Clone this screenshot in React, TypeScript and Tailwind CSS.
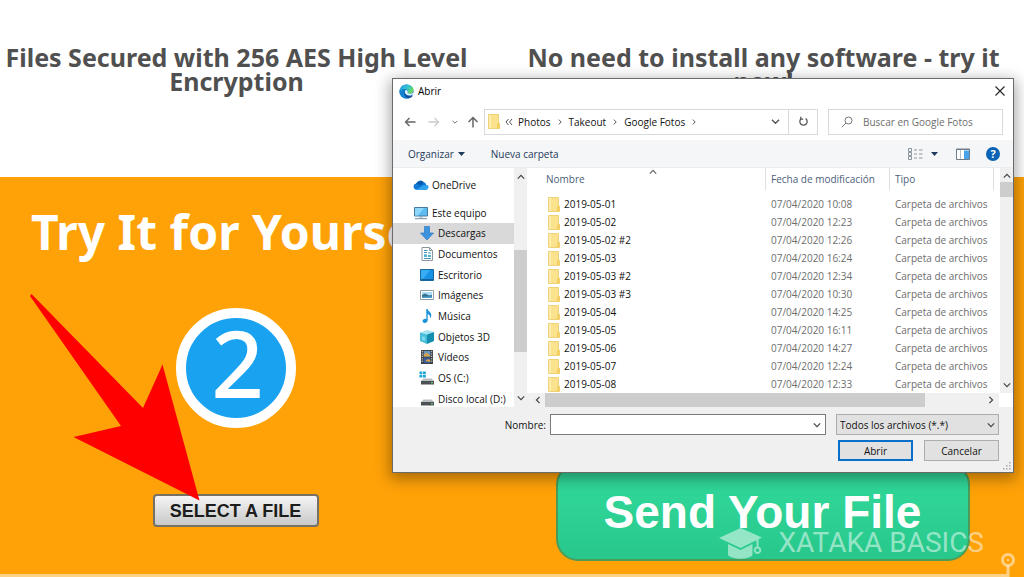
import React from "react";

type IconProps = { className?: string };

const Chevron = ({ className = "" }: IconProps) => (
  <svg viewBox="0 0 10 10" className={className} fill="none" stroke="currentColor" strokeWidth="1.5" aria-hidden="true">
    <path d="M1 3l4 4 4-4" />
  </svg>
);

const Folder = ({ className = "" }: IconProps) => (
  <svg viewBox="0 0 12 15" className={className} aria-hidden="true">
    <path d="M.5.5h10v8.500h1v5.500H.5z" fill="#fbe38e" stroke="#ecc964" strokeWidth=".8" />
    <path d="M1 1h2v13H1z" fill="#fdeeb0" />
    <path d="M9 9.500h2.500v5H9z" fill="#f3cf62" />
  </svg>
);

const EdgeLogo = ({ className = "" }: IconProps) => (
  <svg viewBox="0 0 16 16" className={className} aria-hidden="true">
    <defs>
      <linearGradient id="edgeTop" x1="0" y1="0" x2="1" y2="0.500">
        <stop offset="0" stopColor="#249fe0" />
        <stop offset=".6" stopColor="#35c1d0" />
        <stop offset="1" stopColor="#6adb58" />
      </linearGradient>
    </defs>
    <circle cx="8" cy="8" r="7.500" fill="#1273c6" />
    <path d="M.5 8C.8 3.500 4 .5 8 .5c4.500 0 7.500 3 7.500 6 0 2.500-2 3.800-4.200 3.800-1.800 0-2.400-.6-2.100-1.200.7-1.200.5-3.300-2.200-3.500C3.500 5.400.9 7 .5 8z" fill="url(#edgeTop)" />
    <path d="M7 5.600c-2 .8-2.800 3-1.800 5.300 1.300 3 5 3.800 8.800 1.800-1.300 1.700-3.400 2.800-6 2.800C3.500 15.500.5 12 .5 8 1.500 6 4.500 5 7 5.600z" fill="#1583d2" />
    <path d="M6.400 8.200c0 3.600 3.700 5.500 7.700 4.200.4-.2.700.1.400.4-1.100 1.400-2.800 2.200-4.500 2.300C6.500 14.500 5 11 6.400 8.200z" fill="#14509e" />
    <path d="M7.200 6.300c1.700 0 2.600 1.300 2 2.800-.3.600.3 1.200 2.100 1.200 1.800.1 3-.3 4-1.200-.2 1.900-1.300 2.900-3.300 3.100-3 .2-5.700-1-5.700-3.900 0-.9.300-1.500.9-2z" fill="#e4f5fb" />
  </svg>
);

const CloudIcon = () => (
  <svg viewBox="0 0 16 16" className="size-4" aria-hidden="true">
    <path d="M3.500 12.800A3.200 3.200 0 013 6.500 4.500 4.500 0 0110.500 5a4 4 0 012.800 3 2.500 2.500 0 01-.2 4.800z" fill="#0f78d4" />
    <path d="M4.500 6a4.300 4.300 0 016.300-.8l-3.300 3L3 6.600z" fill="#0a55a5" />
    <path d="M3.500 12.800l7-4.600 4.600.4c1.200 2-.3 4.200-2 4.200z" fill="#2ea5ee" />
  </svg>
);

const ComputerIcon = () => (
  <svg viewBox="0 0 16 16" className="size-4" aria-hidden="true">
    <path d="M1.500 2.500h13v8.500h-13z" fill="#5dbdf3" stroke="#47799c" />
    <path d="M2 3h9L5 10.500H2z" fill="#8ed7fb" />
    <path d="M6 11.500h4v1H6zM2 13h12v1.200H2z" fill="#8ba5b6" />
  </svg>
);

const DownloadIcon = () => (
  <svg viewBox="0 0 16 16" className="size-4" aria-hidden="true">
    <path d="M5.500 1.500h5V8h4L8 15 1.500 8h4z" fill="#3c94df" stroke="#2b78c2" strokeWidth=".7" />
  </svg>
);

const DocumentIcon = () => (
  <svg viewBox="0 0 16 16" className="size-4" aria-hidden="true">
    <path d="M3 1.500h7.500L13.500 4.500v10H3z" fill="#fff" stroke="#8a979f" />
    <path d="M10.500 1.500v3h3" fill="none" stroke="#8a979f" />
    <path d="M5 4.500h3.500M5 6.500h3M9 7h3M5 9h2M5 12.500h7" stroke="#4694b8" />
    <path d="M5 8.500h3v2.500H5zM9 9h3v2H9z" fill="#4db3d3" />
  </svg>
);

const DesktopIcon = () => (
  <svg viewBox="0 0 16 16" className="size-4" aria-hidden="true">
    <path d="M1.500 2.500h13v11h-13z" fill="#1792e4" stroke="#17699f" />
    <path d="M2 3h9L4 12H2z" fill="#39adf3" />
    <path d="M2 12h12v1.200H2z" fill="#12629c" />
  </svg>
);

const PictureIcon = () => (
  <svg viewBox="0 0 16 16" className="size-4" aria-hidden="true">
    <path d="M1.500 3.500h13v9h-13z" fill="#fff" stroke="#8e9aa1" />
    <path d="M3 5h10v6H3z" fill="#a9dcf5" />
    <path d="M3 8l3-1.500 4 2 3-.5v3H3z" fill="#386e91" />
    <path d="M3 9.800l10-.6V11H3z" fill="#4ba0cb" />
  </svg>
);

const MusicIcon = () => (
  <svg viewBox="0 0 16 16" className="size-4" aria-hidden="true">
    <path d="M7.300 1h1.400c.2 2.200 3.700 3.200 3.600 6.200 0 1.300-.5 2.200-1.200 3 .3-2.200-.6-3.600-2.400-4.300v6.300c0 1.500-1.300 2.800-3 2.800-1.400 0-2.200-.8-2.200-1.900 0-1.700 2-2.800 3.800-2.200z" fill="#1c93dc" />
  </svg>
);

const CubeIcon = () => (
  <svg viewBox="0 0 16 16" className="size-4" aria-hidden="true">
    <path d="M1 3.500L8.500 1 15 3 8 5.500z" fill="#a1e4f2" />
    <path d="M1 3.500l7 2V15l-7-3z" fill="#46bdd9" />
    <path d="M8 5.500L15 3v9l-7 3z" fill="#148eae" />
    <path d="M3 7l3 1v4l-3-1z" fill="#7ad9ec" />
  </svg>
);

const VideoIcon = () => (
  <svg viewBox="0 0 16 16" className="size-4" aria-hidden="true">
    <path d="M2 1h12v14H2z" fill="#3e4245" />
    <path d="M4.700 2h6.600v5.500H4.700z" fill="#6297c9" />
    <path d="M4.700 8.500h6.600V14H4.700z" fill="#365d99" />
    <path d="M4.700 5.500l3-2 3.600 3v1H4.700zM6 12l3-2 2.300 1v2z" fill="#d5a24c" />
    <path d="M3.300 2v12M12.700 2v12" stroke="#d7dadb" strokeWidth="1" strokeDasharray="1.200 1.200" />
  </svg>
);

const DriveShape = () => (
  <>
    <path d="M3.500 8.500h8L14 11H1z" fill="#b9bdc0" />
    <path d="M1 11h13v3.500H1z" fill="#4b5053" />
    <path d="M11 12.300h2v1h-2z" fill="#7fe089" />
  </>
);

const OsDriveIcon = () => (
  <svg viewBox="0 0 16 16" className="size-4" aria-hidden="true">
    <g transform="translate(1 0)"><DriveShape /></g>
    <path d="M.5 1.500h2.800v2.600H.5zM4 1.500h2.800v2.600H4zM.5 4.800h2.800v2.600H.5zM4 4.800h2.800v2.600H4z" fill="#1aa4d8" />
  </svg>
);

const DriveIcon = () => (
  <svg viewBox="0 0 16 16" className="size-4" aria-hidden="true">
    <g transform="translate(1 0)"><DriveShape /></g>
  </svg>
);

const places = [
  { name: "Descargas", Icon: DownloadIcon, active: true },
  { name: "Documentos", Icon: DocumentIcon },
  { name: "Escritorio", Icon: DesktopIcon },
  { name: "Imágenes", Icon: PictureIcon },
  { name: "Música", Icon: MusicIcon },
  { name: "Objetos 3D", Icon: CubeIcon },
  { name: "Vídeos", Icon: VideoIcon },
  { name: "OS (C:)", Icon: OsDriveIcon },
  { name: "Disco local (D:)", Icon: DriveIcon },
];

const files = [
  ["2019-05-01", "07/04/2020 10:08"],
  ["2019-05-02", "07/04/2020 12:23"],
  ["2019-05-02 #2", "07/04/2020 12:26"],
  ["2019-05-03", "07/04/2020 16:24"],
  ["2019-05-03 #2", "07/04/2020 12:34"],
  ["2019-05-03 #3", "07/04/2020 10:30"],
  ["2019-05-04", "07/04/2020 14:25"],
  ["2019-05-05", "07/04/2020 16:11"],
  ["2019-05-06", "07/04/2020 14:27"],
  ["2019-05-07", "07/04/2020 12:24"],
  ["2019-05-08", "07/04/2020 12:33"],
];

function NavigationBar() {
  return (
    <div className="flex h-[37px] items-center pr-[10px] pl-2 text-[#666]">
      <button type="button" aria-label="Atrás" className="flex w-[27px] justify-start pl-[3px]">
        <svg viewBox="0 0 12 12" className="size-3" fill="none" stroke="currentColor" strokeWidth="1.400"><path d="M11.500 6H1.500M5.500 2l-4 4 4 4" /></svg>
      </button>
      <button type="button" aria-label="Adelante" className="flex w-[22px] justify-start text-[#ccc]">
        <svg viewBox="0 0 12 12" className="size-3" fill="none" stroke="currentColor" strokeWidth="1.400"><path d="M.5 6h10M6.500 2l4 4-4 4" /></svg>
      </button>
      <button type="button" aria-label="Ubicaciones recientes" className="flex w-4 justify-start pl-[2px]">
        <Chevron className="size-[6px]" />
      </button>
      <button type="button" aria-label="Subir" className="flex w-[18px] justify-start pl-px">
        <svg viewBox="0 0 12 12" className="size-3" fill="none" stroke="currentColor" strokeWidth="1.500"><path d="M6 11.500V1.500M1.500 6L6 1.500 10.500 6" /></svg>
      </button>
      <div className="flex h-[26px] min-w-0 flex-1 items-center border border-[#d9d9d9] pl-[3px] text-[#111]">
        <Folder className="h-[15px] w-3" />
        <svg viewBox="0 0 8 8" className="mx-[5px] size-2" fill="none" stroke="#555"><path d="M3.500 1L1 4l2.500 3M7 1L4.500 4 7 7" /></svg>
        <nav aria-label="Ruta" className="flex flex-1 items-center">
          {["Photos", "Takeout", "Google Fotos"].map((part) => (
            <React.Fragment key={part}>
              <a href="#ruta">{part}</a>
              <Chevron className="mx-[6px] size-[6px] -rotate-90 text-[#444]" />
            </React.Fragment>
          ))}
        </nav>
        <button type="button" aria-label="Ubicaciones anteriores" className="px-2 text-[#555]"><Chevron className="size-[9px]" /></button>
        <button type="button" aria-label="Actualizar" className="flex h-full w-[29px] items-center justify-center border-l border-[#d9d9d9] text-[#555]">
          <svg viewBox="0 0 12 12" className="size-[11px]" fill="none" stroke="currentColor" strokeWidth="1.400"><path d="M8.300 2.800a4 4 0 11-4.600 0M3 .8v2.700h2.700" /></svg>
        </button>
      </div>
      <label className="ml-[10px] flex h-[26px] w-[175px] items-center border border-[#d9d9d9] pl-3">
        <svg viewBox="0 0 12 12" className="size-3 shrink-0" fill="none" stroke="#777"><circle cx="7.500" cy="4.500" r="3.500" /><path d="M5 7L.8 11.200" /></svg>
        <input aria-label="Buscar en Google Fotos" placeholder="Buscar en Google Fotos" className="ml-[10px] w-full min-w-0 bg-transparent outline-none placeholder:text-[#6d6d6d]" />
      </label>
    </div>
  );
}

function Toolbar() {
  return (
    <div className="flex h-7 items-center border-b border-[#ececec] bg-[#f5f6f7] pr-[13px] pl-[15px] text-[#1e395b]">
      <button type="button" className="flex items-center gap-1">
        Organizar
        <svg viewBox="0 0 7 4" className="h-1 w-[7px]"><path d="M0 0h7L3.500 4z" fill="currentColor" /></svg>
      </button>
      <button type="button" className="ml-[26px] flex-1 text-left">Nueva carpeta</button>
      <button type="button" aria-label="Cambiar la vista" className="flex items-center gap-2">
        <svg viewBox="0 0 15 12" className="h-3 w-[15px]" fill="none" stroke="#8b949b">
          <path d="M.5.5h3v3h-3zM.5 4.500h3v3h-3zM.5 8.500h3v3h-3z" />
          <path d="M6 2h3M11 2h3.500M6 6h3M11 6h3.500M6 10h3M11 10h3.500" />
        </svg>
        <svg viewBox="0 0 7 4" className="h-1 w-[7px]"><path d="M0 0h7L3.500 4z" fill="currentColor" /></svg>
      </button>
      <button type="button" aria-label="Panel de vista previa" className="ml-[18px]">
        <svg viewBox="0 0 14 12" className="h-3 w-[14px]"><path d="M.5 1h13v10.500H.5z" fill="#fff" stroke="#6e7d8a" /><path d="M.5 1.500h13" stroke="#6e7d8a" /><path d="M8 2.500h5V11H8z" fill="#4aa3e8" /><path d="M4.500 2v9" stroke="#b8c2ca" /></svg>
      </button>
      <button type="button" aria-label="Ayuda" className="ml-4 flex size-[14px] items-center justify-center rounded-full bg-[#0a63b4] text-[11px] leading-none font-bold text-white">?</button>
    </div>
  );
}

function Sidebar() {
  return (
    <div className="flex w-[134px] shrink-0">
      <ul className="flex min-w-0 flex-1 flex-col overflow-hidden pt-[6px] text-[#111]">
        <li className="flex h-[21px] items-center gap-[3px] pl-5"><CloudIcon />OneDrive</li>
        <li className="mt-[7px] flex h-[21px] items-center gap-[3px] pl-5"><ComputerIcon />Este equipo</li>
        <li className="-mb-[2px] flex-1">
          <ul className="flex h-full flex-col">
            {places.map(({ name, Icon, active }) => (
              <li key={name} className={active ? "flex flex-1 items-center gap-[3px] bg-[#d9d9d9] pl-[26px] whitespace-nowrap" : "flex flex-1 items-center gap-[3px] pl-[26px] whitespace-nowrap"}>
                <Icon />{name}
              </li>
            ))}
          </ul>
        </li>
      </ul>
      <div className="flex w-[13px] flex-col items-center bg-[#f0f0f0] py-1 text-[#444]">
        <Chevron className="my-px size-2 rotate-180" />
        <div className="mt-[68px] h-[102px] w-full bg-[#cdcdcd]" />
        <Chevron className="mt-auto mb-px size-2" />
      </div>
    </div>
  );
}

function FileList() {
  return (
    <div className="flex min-w-0 flex-1 flex-col">
      <div className="flex">
        <table className="min-w-0 flex-1 table-fixed border-collapse text-left text-[#6d6d6d]">
          <colgroup>
            <col />
            <col className="w-[124px]" />
            <col className="w-[104px]" />
            <col className="w-[7px]" />
          </colgroup>
          <thead>
            <tr className="h-[27px] align-top text-[#4c607a]">
              <th className="relative p-0 font-normal">
                <Chevron className="absolute top-0 left-[122px] size-2 rotate-180 text-[#666]" />
                <div className="flex h-[22px] items-center pl-[19px]">Nombre</div>
              </th>
              <th className="p-0 font-normal"><div className="flex h-[22px] items-center border-l border-[#e0e0e0] pl-[5px]">Fecha de modificación</div></th>
              <th className="p-0 font-normal"><div className="flex h-[22px] items-center border-l border-[#e0e0e0] pl-[5px]">Tipo</div></th>
              <th className="p-0"><div className="h-[22px] border-l border-[#e0e0e0]" /></th>
            </tr>
          </thead>
          <tbody>
            {files.map(([name, date]) => (
              <tr key={name} className="h-[18px]">
                <td className="p-0 text-[#111]"><div className="flex h-[18px] items-center gap-1 pl-[21px]"><Folder className="h-[15px] w-3" />{name}</div></td>
                <td className="p-0 pl-[6px]">{date}</td>
                <td className="p-0 pl-[6px]" colSpan={2}>Carpeta de archivos</td>
              </tr>
            ))}
          </tbody>
        </table>
        <div className="flex w-[13px] shrink-0 flex-col items-center bg-[#f0f0f0] text-[#444]">
          <Chevron className="mt-1 mb-[2px] size-2 rotate-180" />
          <div className="h-[15px] w-full bg-[#cdcdcd]" />
          <Chevron className="mt-auto mb-1 size-2" />
        </div>
      </div>
      <div className="mr-[14px] flex h-[14px] items-center bg-[#f0f0f0] text-[#444]">
        <Chevron className="mr-[3px] ml-[7px] size-2 rotate-90" />
        <div className="h-full w-[380px] bg-[#cdcdcd]" />
        <Chevron className="mr-1 ml-auto size-2 -rotate-90" />
      </div>
    </div>
  );
}

function FileDialog() {
  return (
    <section
      role="dialog"
      aria-label="Abrir"
      className="absolute top-[78px] right-[10px] left-[392px] border border-[#6b6b6b] bg-white font-['Open_Sans','Noto_Sans',sans-serif] text-[10px] leading-[14px] shadow-[0_4px_14px_2px_rgba(0,0,0,0.35)]"
    >
      <header className="flex h-6 items-center pr-2 pl-[6px] text-black">
        <EdgeLogo className="size-[15px]" />
        <h2 className="ml-1 flex-1">Abrir</h2>
        <button type="button" aria-label="Cerrar">
          <svg viewBox="0 0 10 10" className="size-[10px]" stroke="#222" strokeWidth="1.100"><path d="M.5.5l9 9M9.500.5l-9 9" /></svg>
        </button>
      </header>
      <NavigationBar />
      <Toolbar />
      <div className="flex">
        <Sidebar />
        <FileList />
      </div>
      <form className="relative flex flex-col gap-[5px] bg-[#f0f0f0] pt-[7px] pr-[14px] pb-[11px] text-[#111]" onSubmit={(event) => event.preventDefault()}>
        <div className="flex items-center">
          <label htmlFor="filename" className="w-[157px] pr-1 text-right">Nombre:</label>
          <div className="flex h-[21px] flex-1 items-center border border-[#7a7a7a] bg-white">
            <input id="filename" className="h-full min-w-0 flex-1 bg-transparent px-1 outline-none" />
            <Chevron className="mr-1 size-2 text-[#444]" />
          </div>
          <div className="ml-[10px] grid w-[163px] items-center">
            <select aria-label="Tipo de archivo" className="col-start-1 row-start-1 h-[21px] w-full appearance-none border border-[#adadad] bg-[#e1e1e1] pl-[3px]">
              <option>Todos los archivos (*.*)</option>
            </select>
            <Chevron className="pointer-events-none col-start-1 row-start-1 mr-1 size-2 justify-self-end text-[#444]" />
          </div>
        </div>
        <div className="flex justify-end gap-[11px]">
          <button type="submit" className="h-[21px] w-[75px] border-2 border-[#0a6fc9] bg-[#e1e1e1]">Abrir</button>
          <button type="button" className="h-[21px] w-[75px] border border-[#adadad] bg-[#e1e1e1]">Cancelar</button>
        </div>
        <svg viewBox="0 0 8 8" className="absolute right-[2px] bottom-[2px] size-2" fill="#aaa" aria-hidden="true">
          <path d="M6 0h1.500v1.500H6zM6 3h1.500v1.500H6zM6 6h1.500v1.500H6zM3 3h1.500v1.500H3zM3 6h1.500v1.500H3zM0 6h1.500v1.500H0z" />
        </svg>
      </form>
    </section>
  );
}

function Watermark() {
  return (
    <>
      <div className="pointer-events-none absolute right-10 bottom-4 flex items-center gap-4 font-[Roboto,sans-serif] text-[28px] leading-9 text-white/50">
        <svg viewBox="0 0 43 31" className="h-[31px] w-[43px]" fill="currentColor" aria-hidden="true">
          <path d="M21.500 0L43 9.500l-3.500 1.700v7.300a3.800 3.800 0 11-2 0v-6.300L21.500 20 0 10zM38.500 20.500a1.800 1.800 0 100 3.600 1.800 1.800 0 000-3.600z" fillRule="evenodd" />
          <path d="M9 16l12.500 6L33.500 16v11c-4 5-20 5-24.500 0z" />
        </svg>
        <span>XATAKA BASICS</span>
      </div>
      <div className="pointer-events-none absolute inset-x-0 bottom-0 flex items-end text-white/50">
        <div className="h-[3px] flex-1 bg-white/50" />
        <svg viewBox="0 0 14 24" className="mr-[9px] h-6 w-[14px]" fill="none" stroke="currentColor" aria-hidden="true">
          <circle cx="7" cy="7" r="5.500" strokeWidth="3" />
          <path d="M7 12.500V22.500H0" strokeWidth="3" />
          <circle cx="7" cy="7" r="1.200" fill="currentColor" stroke="none" />
        </svg>
      </div>
    </>
  );
}

export default function App() {
  return (
    <div className="relative flex min-h-screen flex-col overflow-hidden bg-white font-['Noto_Sans','DejaVu_Sans',sans-serif]">
      <section className="-mr-[3px] -ml-[27px] grid h-[177px] grid-cols-2 pt-[45px] text-center text-[25px] leading-6 font-bold text-[#505050]">
        <h2 className="px-6">Files Secured with 256 AES High Level Encryption</h2>
        <h2 className="px-6">No need to install any software - try it now!</h2>
      </section>
      <main className="flex flex-1 flex-col bg-[#ffa208]">
        <div className="-mr-[2px] -ml-7 grid flex-1 grid-cols-2">
          <div className="flex flex-col items-center pt-[31px]">
            <h1 className="pl-2 text-[48px] leading-[48px] font-bold whitespace-nowrap text-white">Try It for Yourself</h1>
            <div className="mt-[52px] flex size-[120px] items-center justify-center rounded-full border-[10px] border-white bg-[#18a2f0] pb-[10px] pl-1 text-[92px] leading-none font-medium text-white">2</div>
            <button type="button" className="mt-[66px] h-[33px] w-[166px] rounded-[4px] border-2 border-[#777065] bg-linear-to-b from-[#f5f5f5] to-[#c9c9c9] font-['Liberation_Sans',Arial,sans-serif] text-[18px] leading-none font-bold text-[#1c1c1c]">SELECT A FILE</button>
          </div>
          <div className="flex flex-col items-center justify-end pb-4">
            <button type="button" className="h-[98px] w-[414px] rounded-[22px] border-2 border-[#4c9c58] bg-linear-to-b from-[#32dc9c] to-[#28c78b] font-['Liberation_Sans',Arial,sans-serif] text-[46px] leading-none font-bold text-white">Send Your File</button>
          </div>
        </div>
      </main>
      <svg viewBox="0 0 172 207" className="pointer-events-none absolute top-[294px] left-[30px] h-[207px] w-[172px]" fill="red" aria-hidden="true">
        <path d="M0 2L1.500 0l111.500 114L132.500 70.500l37 136L43.500 143 91 132z" />
      </svg>
      <FileDialog />
      <Watermark />
    </div>
  );
}
